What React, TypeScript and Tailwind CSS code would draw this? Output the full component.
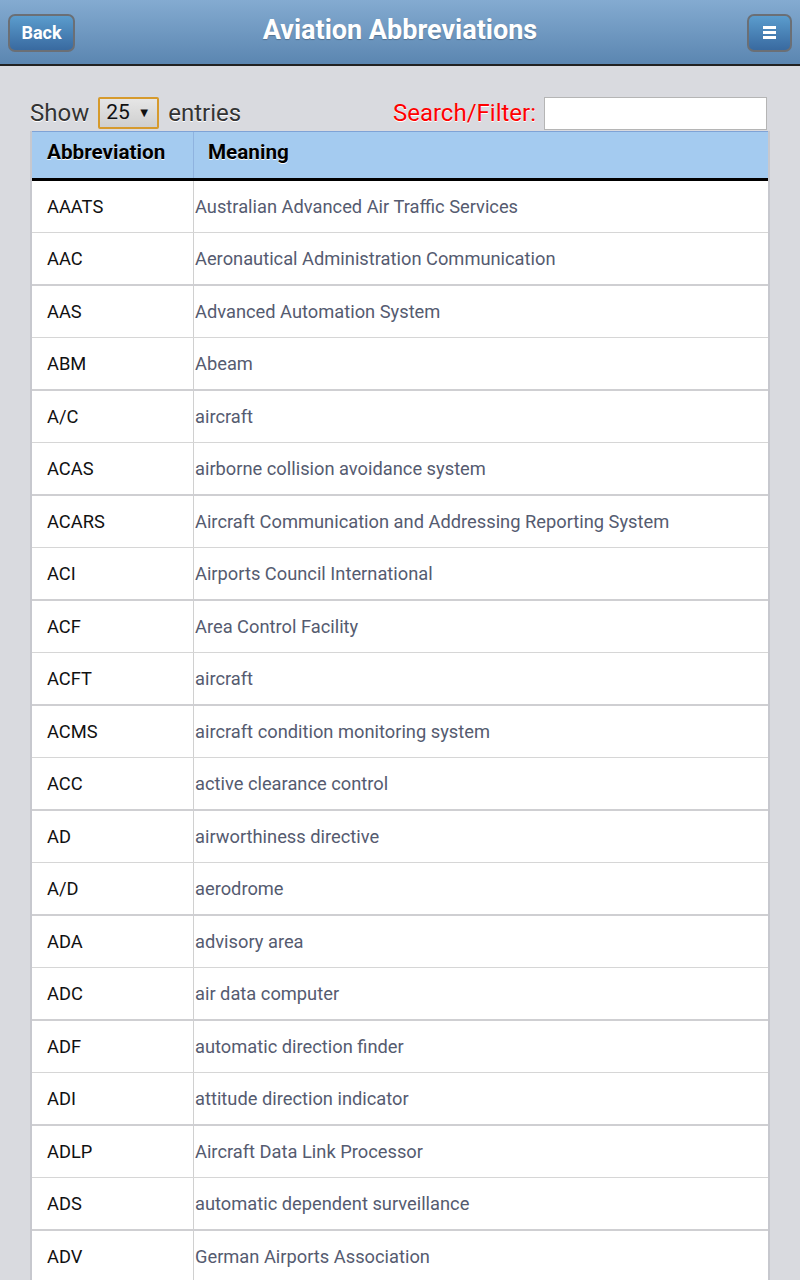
import { useState } from "react";

// Abbreviation list shown on the first page (25 entries per page)
const ROWS: [string, string][] = [
  ["AAATS", "Australian Advanced Air Traffic Services"],
  ["AAC", "Aeronautical Administration Communication"],
  ["AAS", "Advanced Automation System"],
  ["ABM", "Abeam"],
  ["A/C", "aircraft"],
  ["ACAS", "airborne collision avoidance system"],
  ["ACARS", "Aircraft Communication and Addressing Reporting System"],
  ["ACI", "Airports Council International"],
  ["ACF", "Area Control Facility"],
  ["ACFT", "aircraft"],
  ["ACMS", "aircraft condition monitoring system"],
  ["ACC", "active clearance control"],
  ["AD", "airworthiness directive"],
  ["A/D", "aerodrome"],
  ["ADA", "advisory area"],
  ["ADC", "air data computer"],
  ["ADF", "automatic direction finder"],
  ["ADI", "attitude direction indicator"],
  ["ADLP", "Aircraft Data Link Processor"],
  ["ADS", "automatic dependent surveillance"],
  ["ADV", "German Airports Association"],
];

export default function App() {
  const [filter, setFilter] = useState("");
  const rows = ROWS.filter(
    ([a, m]) =>
      a.toLowerCase().includes(filter.toLowerCase()) ||
      m.toLowerCase().includes(filter.toLowerCase())
  );

  return (
    <div className="h-[1280px] overflow-hidden bg-[#d9dadf] font-['Roboto',sans-serif]">
      {/* Top bar */}
      <header className="h-[66px] grid grid-cols-[1fr_auto_1fr] items-center px-[8px] bg-gradient-to-b from-[#84abd1] to-[#5b86b1] border-b-2 border-[#222]">
        <div>
          <button className="h-[38px] w-[67px] rounded-[7px] border-2 border-[#6b6f75] bg-gradient-to-b from-[#5b9ccd] to-[#396aa0] text-white font-bold text-[18px] mt-[1px]">
            Back
          </button>
        </div>
        <h1 className="text-white font-bold text-[27px] [text-shadow:0_1px_1px_rgba(0,0,0,0.25)] -mt-[3px]">
          Aviation Abbreviations
        </h1>
        <div className="flex justify-end">
          <button className="h-[38px] w-[45px] rounded-[7px] border-2 border-[#6b6f75] bg-gradient-to-b from-[#5b9ccd] to-[#396aa0] flex flex-col items-center justify-center gap-[2px] mt-[1px]">
            <span className="block w-[13px] h-[3px] bg-white" />
            <span className="block w-[13px] h-[3px] bg-white" />
            <span className="block w-[13px] h-[3px] bg-white" />
          </button>
        </div>
      </header>

      <div className="pl-[30px] pr-[30px]">
        {/* Length + filter controls */}
        <div className="flex items-center justify-between h-[36px] mt-[29px] pr-[3px]">
          <div className="flex items-center text-[24px] text-[#333] [text-shadow:0_1px_0_#fff]">
            <span>Show</span>
            <div className="ml-[9px] mr-[9px] h-[32px] w-[61px] border-2 border-[#d69a2d] rounded-[2px] bg-gradient-to-b from-[#e6e6e6] to-[#cfcfcf] flex items-center pl-[6px] gap-[8px] text-[21px] text-[#111] [text-shadow:none]">
              <span>25</span>
              <span className="text-[13px]">▼</span>
            </div>
            <span>entries</span>
          </div>
          <div className="flex items-center">
            <span className="text-[24px] text-[#ff0000] [text-shadow:0_1px_0_#fff] mr-[8px]">
              Search/Filter:
            </span>
            <input
              value={filter}
              onChange={(e) => setFilter(e.target.value)}
              className="h-[33px] w-[223px] bg-white border border-[#b5b5b5] outline-none px-1 text-[18px]"
            />
          </div>
        </div>

        {/* Table */}
        <div className="w-[740px] border-l-2 border-r-2 border-[#c7c8ce] bg-white">
          <div className="flex h-[50px] bg-[#a4cbf0] border-t border-[#7fa3d6] border-b-[3px] border-b-black">
            <div className="w-[162px] border-r border-[#8fb3df] pl-[15px] pt-[5px] font-bold text-[20.7px] text-black [text-shadow:0_1px_0_#fff]">
              Abbreviation
            </div>
            <div className="flex-1 pl-[14px] pt-[5px] font-bold text-[20.7px] text-black [text-shadow:0_1px_0_#fff]">
              Meaning
            </div>
          </div>
          {rows.map(([abbr, meaning], i) => (
            <div
              key={abbr + i}
              className={`flex text-[18.3px] ${
                i % 2 === 0
                  ? "h-[52px] border-b border-[#d6d6d6]"
                  : "h-[53px] border-b-2 border-[#cfcfd2]"
              }`}
            >
              <div className="w-[162px] border-r border-[#d0d0d0] pl-[15px] flex items-center text-[#111]">
                {abbr}
              </div>
              <div className="flex-1 pl-[1px] flex items-center text-[#555b70]">
                {meaning}
              </div>
            </div>
          ))}
        </div>
      </div>
    </div>
  );
}
